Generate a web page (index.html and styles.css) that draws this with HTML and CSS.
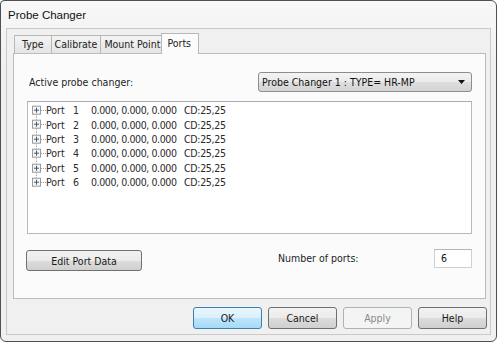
FILE: index.html
```html
<!DOCTYPE html>
<html>
<head>
<meta charset="utf-8">
<link rel="stylesheet" href="styles.css">
</head>
<body>
<div class="window">
  <div class="titlebar">Probe Changer</div>
  <div class="frame">
    <div class="tabs">
      <div class="tab tab-first">Type</div>
      <div class="tab">Calibrate</div>
      <div class="tab">Mount Point</div>
      <div class="tab active">Ports</div>
    </div>
    <div class="panel">
      <div class="row-top">
        <span class="label">Active probe changer:</span>
        <div class="select">
          <span>Probe Changer 1 : TYPE= HR-MP</span>
          <svg class="arrow" width="7" height="4" viewBox="0 0 7 4"><path d="M0 0H7L3.5 4Z" fill="#111"/></svg>
        </div>
      </div>
      <div class="tree">
        <div class="node">
          <svg class="exp" width="14" height="14.4" viewBox="0 0 14 14.4"><path d="M4.5 11.7V14.4M9 7.5H14" stroke="#a0a0a0" stroke-dasharray="1 1"/><rect x="0.5" y="3.2" width="8" height="8" fill="#f6f6f6" stroke="#9a9a9a"/><path d="M2 7.2H7M4.5 4.7V9.7" stroke="#3a5a88"/></svg>
          <span class="c-name">Port</span><span class="c-num">1</span><span class="c-xyz">0.000, 0.000, 0.000</span><span class="c-cd">CD:25,25</span>
        </div>
        <div class="node">
          <svg class="exp" width="14" height="14.4" viewBox="0 0 14 14.4"><path d="M4.5 0V2.7M4.5 11.7V14.4M9 7.5H14" stroke="#a0a0a0" stroke-dasharray="1 1"/><rect x="0.5" y="3.2" width="8" height="8" fill="#f6f6f6" stroke="#9a9a9a"/><path d="M2 7.2H7M4.5 4.7V9.7" stroke="#3a5a88"/></svg>
          <span class="c-name">Port</span><span class="c-num">2</span><span class="c-xyz">0.000, 0.000, 0.000</span><span class="c-cd">CD:25,25</span>
        </div>
        <div class="node">
          <svg class="exp" width="14" height="14.4" viewBox="0 0 14 14.4"><path d="M4.5 0V2.7M4.5 11.7V14.4M9 7.5H14" stroke="#a0a0a0" stroke-dasharray="1 1"/><rect x="0.5" y="3.2" width="8" height="8" fill="#f6f6f6" stroke="#9a9a9a"/><path d="M2 7.2H7M4.5 4.7V9.7" stroke="#3a5a88"/></svg>
          <span class="c-name">Port</span><span class="c-num">3</span><span class="c-xyz">0.000, 0.000, 0.000</span><span class="c-cd">CD:25,25</span>
        </div>
        <div class="node">
          <svg class="exp" width="14" height="14.4" viewBox="0 0 14 14.4"><path d="M4.5 0V2.7M4.5 11.7V14.4M9 7.5H14" stroke="#a0a0a0" stroke-dasharray="1 1"/><rect x="0.5" y="3.2" width="8" height="8" fill="#f6f6f6" stroke="#9a9a9a"/><path d="M2 7.2H7M4.5 4.7V9.7" stroke="#3a5a88"/></svg>
          <span class="c-name">Port</span><span class="c-num">4</span><span class="c-xyz">0.000, 0.000, 0.000</span><span class="c-cd">CD:25,25</span>
        </div>
        <div class="node">
          <svg class="exp" width="14" height="14.4" viewBox="0 0 14 14.4"><path d="M4.5 0V2.7M4.5 11.7V14.4M9 7.5H14" stroke="#a0a0a0" stroke-dasharray="1 1"/><rect x="0.5" y="3.2" width="8" height="8" fill="#f6f6f6" stroke="#9a9a9a"/><path d="M2 7.2H7M4.5 4.7V9.7" stroke="#3a5a88"/></svg>
          <span class="c-name">Port</span><span class="c-num">5</span><span class="c-xyz">0.000, 0.000, 0.000</span><span class="c-cd">CD:25,25</span>
        </div>
        <div class="node">
          <svg class="exp" width="14" height="14.4" viewBox="0 0 14 14.4"><path d="M4.5 0V2.7M9 7.5H14" stroke="#a0a0a0" stroke-dasharray="1 1"/><rect x="0.5" y="3.2" width="8" height="8" fill="#f6f6f6" stroke="#9a9a9a"/><path d="M2 7.2H7M4.5 4.7V9.7" stroke="#3a5a88"/></svg>
          <span class="c-name">Port</span><span class="c-num">6</span><span class="c-xyz">0.000, 0.000, 0.000</span><span class="c-cd">CD:25,25</span>
        </div>
      </div>
      <div class="row-bottom">
        <button class="btn btn-edit">Edit Port Data</button>
        <span class="label label-ports">Number of ports:</span>
        <div class="input">6</div>
      </div>
    </div>
    <div class="actions">
      <button class="btn btn-action btn-default">OK</button>
      <button class="btn btn-action">Cancel</button>
      <button class="btn btn-action btn-disabled">Apply</button>
      <button class="btn btn-action">Help</button>
    </div>
  </div>
</div>
</body>
</html>
```
FILE: styles.css
```css
* { box-sizing: border-box; }
html, body { margin: 0; padding: 0; background: #ffffff; }
body {
  font-family: "DejaVu Sans Condensed", "DejaVu Sans", sans-serif;
  font-stretch: condensed;
  font-size: 10.5px;
  color: #1e1e1e;
}
.window {
  width: 497px;
  height: 342px;
  border: 1px solid #505050;
  border-radius: 4px 6px 6px 6px;
  background: linear-gradient(#f8f8f8, #f0f0f0 60px);
  padding: 0 5px 6px 5px;
  display: flex;
  flex-direction: column;
}
.titlebar {
  height: 27px;
  line-height: 29px;
  padding-left: 2px;
  font-family: "Liberation Sans", Arial, sans-serif;
  font-stretch: normal;
  font-size: 11.5px;
  color: #111;
}
.frame {
  height: 307px;
  border: 1px solid #c9c9c9;
  background: #f0f0f0;
  padding: 4px 4px 0 6px;
  display: flex;
  flex-direction: column;
}
.tabs {
  height: 20px;
  display: flex;
  align-items: flex-end;
  padding-left: 1px;
}
.tab {
  flex: none;
  height: 18px;
  line-height: 17px;
  padding: 0 3px;
  border: 1px solid #b7b7b7;
  border-bottom: none;
  background: linear-gradient(#f4f4f4, #e4e4e4);
  margin-right: -1px;
  color: #222;
}
.tab-first { padding: 0 7px; }
.tab.active {
  height: 21px;
  line-height: 18px;
  margin-left: -2px;
  margin-bottom: -1px;
  padding: 0 7px 0 5px;
  background: #fbfbfb;
  position: relative;
  z-index: 1;
}
.panel {
  height: 246px;
  border: 1px solid #bcbcbc;
  background: #fbfbfb;
  padding: 18px 13px 0 13px;
}
.row-top {
  height: 20px;
  display: flex;
  align-items: center;
  justify-content: space-between;
}
.label { padding-left: 2px; }
.select {
  width: 214px;
  height: 20px;
  border: 1px solid #8d8d8d;
  border-radius: 3px;
  background: linear-gradient(#f3f3f3 0%, #ebebeb 50%, #dedede 51%, #d4d4d4 100%);
  display: flex;
  align-items: center;
  justify-content: space-between;
  padding: 0 6px 0 3px;
  color: #111;
}
.tree {
  margin-top: 9px;
  height: 133px;
  border: 1px solid #b9b9b9;
  border-top-color: #a9abb1;
  background: #ffffff;
  padding: 1px 0 0 4px;
  color: #2a2a2a;
}
.node {
  height: 14.4px;
  display: flex;
  align-items: center;
  white-space: nowrap;
}
.exp { flex: none; display: block; }
.c-name { width: 27px; flex: none; }
.c-num { width: 18px; flex: none; }
.c-xyz { width: 93px; flex: none; letter-spacing: -0.4px; }
.c-cd { letter-spacing: -0.3px; }
.row-bottom {
  margin-top: 15px;
  display: flex;
  align-items: flex-start;
}
.btn {
  font: inherit;
  color: #1a1a1a;
  border: 1px solid #707070;
  border-radius: 3px;
  background: linear-gradient(#f2f2f2 0%, #ebebeb 50%, #dddddd 51%, #cfcfcf 100%);
  padding: 0;
  margin: 0;
}
.btn-edit {
  width: 116px;
  height: 21px;
  margin-left: -1px;
  margin-top: 1px;
}
.label-ports {
  margin-left: 134px;
  line-height: 19px;
}
.input {
  margin-left: auto;
  width: 38px;
  height: 19px;
  border: 1px solid #d0d0d0;
  border-top-color: #b5b5b5;
  background: #fff;
  padding-left: 6px;
  line-height: 16px;
  color: #111;
}
.actions {
  margin-top: 8px;
  margin-right: -1px;
  display: flex;
  justify-content: flex-end;
  gap: 6px;
}
.btn-action {
  width: 69px;
  height: 22px;
}
.btn-default {
  border-color: #3c7fb1;
  background: linear-gradient(#eaf6fd 0%, #d9f0fc 50%, #bee6fd 51%, #a7d9f5 100%);
}
.btn-disabled {
  border-color: #adb2b5;
  background: #f4f4f4;
  color: #8a8a8a;
}
```
